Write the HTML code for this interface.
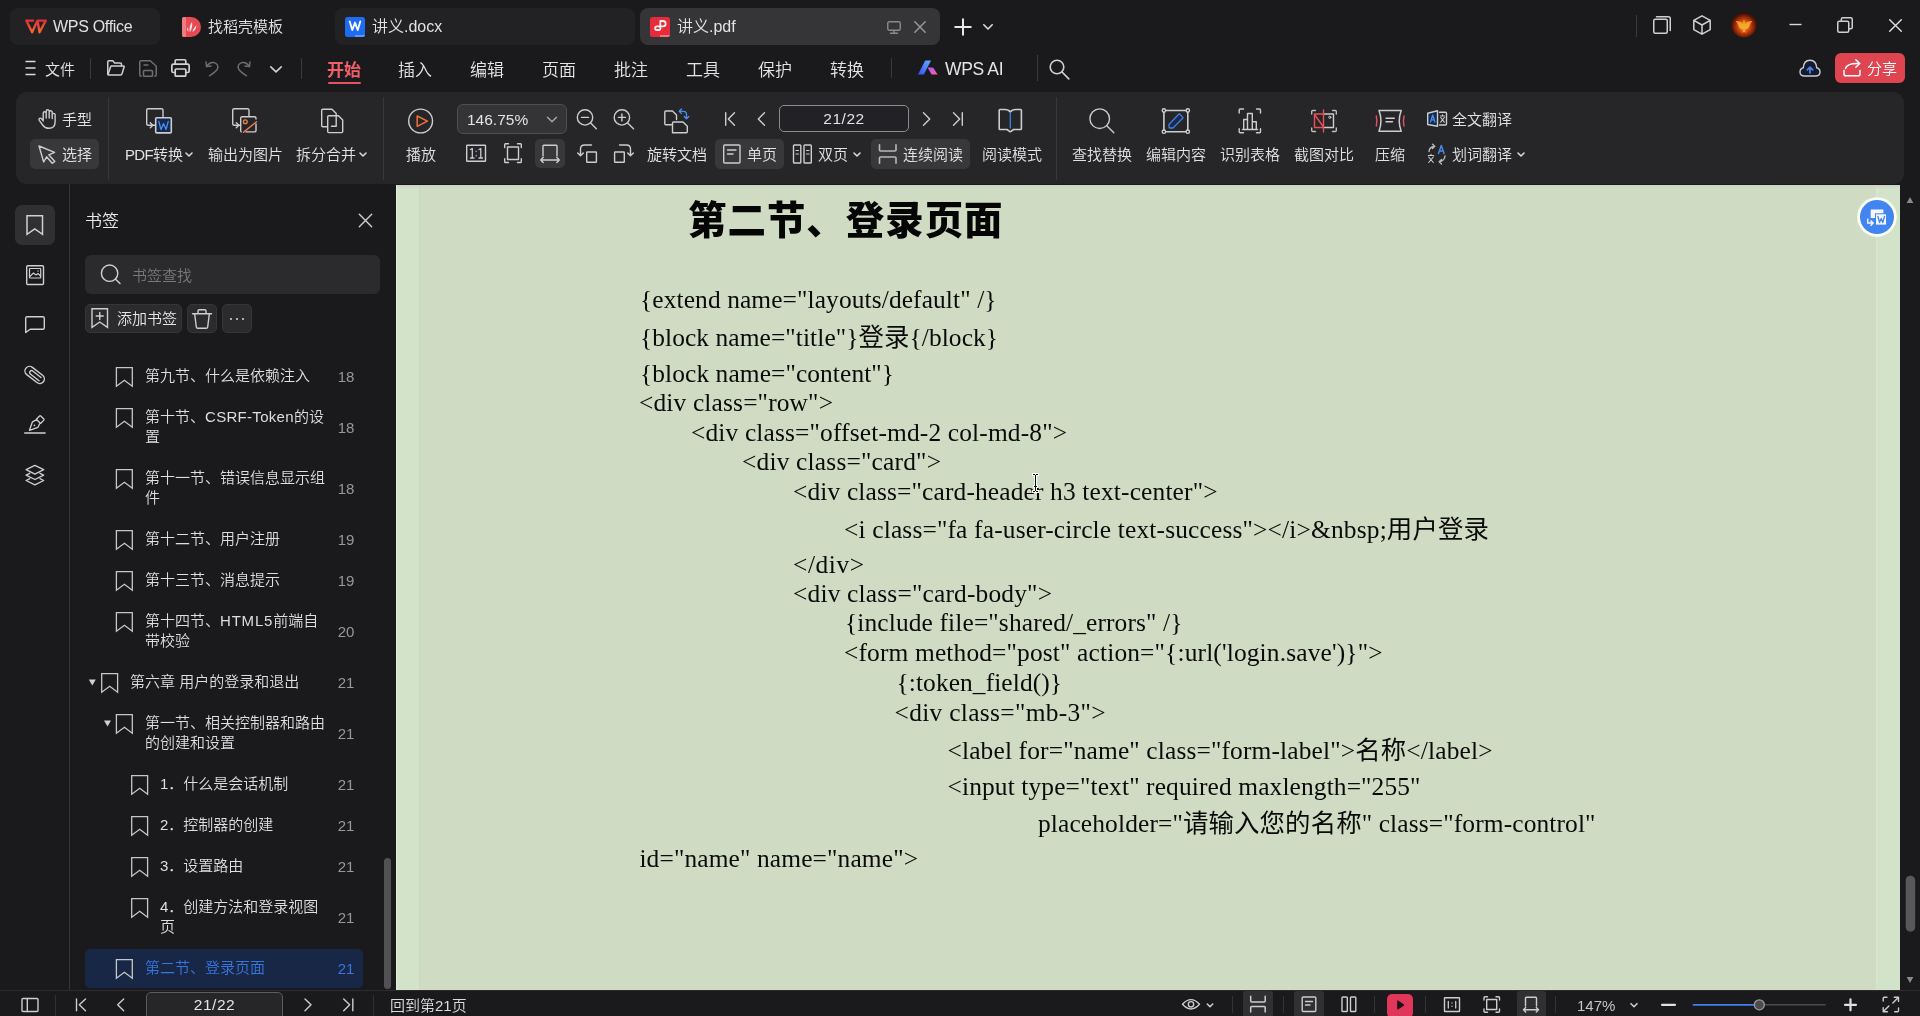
<!DOCTYPE html>
<html lang="zh-CN">
<head>
<meta charset="utf-8">
<title>讲义.pdf - WPS Office</title>
<style>
*{box-sizing:border-box;margin:0;padding:0}
html,body{width:1920px;height:1016px;overflow:hidden;background:#1a1a1c;}
body{position:relative;font-family:"Liberation Sans","Noto Sans CJK SC",sans-serif;color:#e6e6e6;font-size:14px;font-weight:350;}
.rl,.menu,.bm,.t,.pg,.tabtxt{will-change:transform}
.abs{position:absolute}
svg{display:block;overflow:visible;position:absolute}
.t{position:absolute;white-space:nowrap;line-height:1}
.ic{fill:none;stroke:#d8d8d8;stroke-width:1.5;stroke-linecap:round;stroke-linejoin:round}
/* ---------- title bar ---------- */
#titlebar{position:absolute;left:0;top:0;width:1920px;height:48px;background:#1a1a1c}
.tab{position:absolute;top:8px;height:37px;border-radius:8px}
.tabtxt{position:absolute;top:17px;font-size:16px;line-height:20px;color:#e2e2e2;white-space:nowrap}
/* ---------- menu bar ---------- */
#menubar{position:absolute;left:0;top:48px;width:1920px;height:44px;background:#1a1a1c}
.menu{position:absolute;top:12.5px;font-size:17px;line-height:20px;color:#e4e4e4;white-space:nowrap}
.vdiv{position:absolute;width:1px;background:#3a3a3c}
/* ---------- ribbon ---------- */
.rl{position:absolute;font-size:15px;line-height:18px;color:#e2e2e2;white-space:nowrap}
.hl{position:absolute;background:#38383a;border-radius:5px}
/* ---------- sidebar ---------- */
.bm{position:absolute;font-size:15px;line-height:20px;color:#dcdcdc;white-space:nowrap}
.pg{position:absolute;left:264px;width:30px;font-size:15px;line-height:20px;color:#9a9a9c;text-align:center}
/* ---------- document ---------- */
/* ---------- status bar ---------- */
</style>
</head>
<body>
<div id="titlebar">
  <!-- WPS Office home tab -->
  <div class="tab" style="left:10px;width:150px;background:#222224"></div>
  <svg style="left:24px;top:18px" width="24" height="17" viewBox="24 18 24 17">
    <defs><linearGradient id="wg" x1="0" y1="0" x2="0" y2="1"><stop offset="0" stop-color="#e22f3e"/><stop offset="1" stop-color="#f46a2a"/></linearGradient></defs>
    <path d="M34.200 20.600 H26.300 L32.130 32.300 L37.480 20.600 H45.800 L39.530 32.300 L37.480 20.600" fill="none" stroke="url(#wg)" stroke-width="2.300" stroke-linejoin="round" stroke-linecap="butt"/>
  </svg>
  <div class="tabtxt" style="left:53px;letter-spacing:-0.3px;color:#e0e0e0">WPS Office</div>
  <!-- 找稻壳模板 -->
  <svg style="left:182px;top:17px" width="19" height="20" viewBox="0 0 19 20">
    <path d="M0 2 Q0 0 2 0 L9 0 A10 10 0 0 1 9 20 L2 20 Q0 20 0 18 Z" fill="#e84a54"/>
    <path d="M0 2 Q0 0 2 0 L4 0 L4 20 L2 20 Q0 20 0 18 Z" fill="#f07a80"/>
    <path d="M8 15 Q6.5 10 10 5 Q11 10 8 15 Z M10.5 15 Q11 11 14.5 8.5 Q14 13 10.5 15 Z M6.5 15 Q4.5 13 5 10 Q7 12 6.500 15 Z" fill="#fbe4e4"/>
  </svg>
  <div class="tabtxt" style="left:208px;font-size:15px">找稻壳模板</div>
  <!-- 讲义.docx -->
  <div class="tab" style="left:335px;width:300px;background:#222224"></div>
  <svg style="left:345px;top:17px" width="20" height="20" viewBox="0 0 20 20">
    <rect x="0" y="0" width="20" height="20" rx="2.500" fill="#1f6cf2"/>
    <path d="M10 18 H20 V17.500 Q20 20 17.500 20 H10 Z" fill="#5e97f8"/>
    <path d="M4.700 4.400 L7.300 13 L10 5.600 L12.700 13 L15.300 4.400" fill="none" stroke="#f4fbff" stroke-width="1.900" stroke-linejoin="round" stroke-linecap="round"/>
  </svg>
  <div class="tabtxt" style="left:372px">讲义.docx</div>
  <!-- 讲义.pdf active -->
  <div class="tab" style="left:640px;width:300px;background:#353537"></div>
  <svg style="left:650px;top:17px" width="20" height="20" viewBox="0 0 20 20">
    <rect x="0" y="0" width="20" height="20" rx="2.500" fill="#e62c3a"/>
    <path d="M10 18 H20 V17.500 Q20 20 17.500 20 H10 Z" fill="#f2737a"/>
    <path d="M10.300 13 V4 H13 A2.650 2.650 0 0 1 13 9.300 H7 A1.850 1.850 0 0 0 7 13 H10.300" fill="none" stroke="#fdeff0" stroke-width="1.800" stroke-linejoin="round"/>
  </svg>
  <div class="tabtxt" style="left:677px">讲义.pdf</div>
  <svg style="left:887px;top:21px" width="14" height="13" viewBox="0 0 14 13"><rect x="0.750" y="0.750" width="12.500" height="8.500" rx="1.500" class="ic" style="stroke:#8a8a8c;stroke-width:1.400"/><path d="M7 9.500 V12 M3.500 12.300 H10.500" class="ic" style="stroke:#8a8a8c;stroke-width:1.400"/></svg>
  <svg style="left:914px;top:21px" width="12" height="12" viewBox="0 0 12 12"><path d="M0.800 0.800 L11.200 11.200 M11.200 0.800 L0.800 11.200" class="ic" style="stroke:#9a9a9c;stroke-width:1.400"/></svg>
  <!-- plus / chevron -->
  <svg style="left:954px;top:18px" width="18" height="18" viewBox="0 0 18 18"><path d="M9 0.500 V17.500 M0.500 9 H17.500" stroke="#e8e8e8" stroke-width="2" fill="none"/></svg>
  <svg style="left:983px;top:24px" width="10" height="6" viewBox="0 0 10 6"><path d="M0.800 0.800 L5 5 L9.200 0.800" class="ic" style="stroke:#dcdcdc;stroke-width:1.600"/></svg>
  <!-- right controls -->
  <div class="vdiv" style="left:1636px;top:15px;height:22px"></div>
  <svg style="left:1653px;top:16px" width="18" height="18" viewBox="0 0 18 18"><rect x="0.750" y="3.250" width="13.500" height="14" rx="1.500" class="ic" style="stroke:#d0d0d0"/><path d="M3.500 0.750 H15.500 Q17.250 0.750 17.250 2.500 V14.500" class="ic" style="stroke:#d0d0d0"/></svg>
  <svg style="left:1693px;top:15px" width="18" height="20" viewBox="0 0 18 20"><path d="M9 0.800 L17.200 5.400 V14.600 L9 19.200 L0.800 14.600 V5.400 Z M0.800 5.400 L9 10 L17.200 5.400 M9 10 V19.200" class="ic" style="stroke:#d0d0d0"/></svg>
  <!-- avatar -->
  <svg style="left:1731px;top:12px" width="26" height="26" viewBox="0 0 26 26">
    <defs><radialGradient id="av" cx="50%" cy="55%" r="55%"><stop offset="0" stop-color="#f8a030"/><stop offset="0.400" stop-color="#d4500f"/><stop offset="0.750" stop-color="#7c1e08"/><stop offset="1" stop-color="#2c0c06"/></radialGradient></defs>
    <circle cx="13" cy="13" r="12.500" fill="url(#av)"/>
    <path d="M13 8 Q11.500 9.500 12.200 12 Q9 8.500 4.500 9 Q6.500 10 7.500 14 Q9 17.500 12 17.500 L11 21 L13 19.500 L15 21 L14 17.500 Q17 17.500 18.500 14 Q19.500 10 21.500 9 Q17 8.500 13.800 12 Q14.500 9.500 13 8 Z" fill="#f9aa32" opacity="0.900"/>
  </svg>
  <svg style="left:1789px;top:23px" width="13" height="3" viewBox="0 0 13 3"><path d="M0.500 1.500 H12.500" stroke="#d8d8d8" stroke-width="1.400" fill="none"/></svg>
  <svg style="left:1837px;top:17px" width="16" height="16" viewBox="0 0 16 16"><rect x="0.750" y="4.250" width="11" height="11" rx="1.500" class="ic" style="stroke:#d0d0d0"/><path d="M4.300 4 V2.300 Q4.300 0.750 5.800 0.750 H13.700 Q15.250 0.750 15.250 2.300 V10.200 Q15.250 11.700 13.700 11.700 H12" class="ic" style="stroke:#d0d0d0"/></svg>
  <svg style="left:1889px;top:19px" width="13" height="13" viewBox="0 0 13 13"><path d="M0.700 0.700 L12.300 12.300 M12.300 0.700 L0.700 12.300" class="ic" style="stroke:#e0e0e0;stroke-width:1.400"/></svg>
</div>
<div id="menubar">
  <!-- hamburger + 文件 -->
  <svg style="left:25px;top:12px" width="11" height="16" viewBox="0 0 11 16"><path d="M0.500 1.500 H10.500 M0.500 8 H10.500 M0.500 14.500 H10.500" stroke="#dcdcdc" stroke-width="1.500" fill="none"/></svg>
  <div class="menu" style="left:45px;top:11.5px;font-size:15px">文件</div>
  <div class="vdiv" style="left:90px;top:10px;height:21px"></div>
  <!-- open -->
  <svg style="left:107px;top:12px" width="18" height="16" viewBox="0 0 18 16"><path d="M0.750 14 V2 Q0.750 0.750 2 0.750 H5.800 L7.600 2.900 H13.300 Q14.500 2.900 14.500 4.100 V5.800" class="ic" style="stroke:#cfcfcf"/><path d="M0.900 14.800 L3.600 6.700 Q3.900 5.900 4.800 5.900 H16.300 Q17.500 5.900 17.100 7 L14.900 14 Q14.600 14.900 13.700 14.900 H1.200 Z" class="ic" style="stroke:#cfcfcf"/></svg>
  <!-- save (dim) -->
  <svg style="left:139px;top:12px" width="18" height="18" viewBox="0 0 18 18"><path d="M2.200 16.250 Q0.750 16.250 0.750 14.800 V2.200 Q0.750 0.750 2.200 0.750 H11.300 L17.250 6.300 V14.800 Q17.250 16.250 15.800 16.250" class="ic" style="stroke:#6e6e70"/><path d="M5 5 H9" class="ic" style="stroke:#6e6e70"/><rect x="4.500" y="10.500" width="9" height="5.800" rx="0.800" class="ic" style="stroke:#6e6e70"/></svg>
  <!-- print -->
  <svg style="left:171px;top:11px" width="19" height="18" viewBox="0 0 19 18"><path d="M4.200 5 V2 Q4.200 0.750 5.400 0.750 H13.600 Q14.800 0.750 14.800 2 V5" class="ic" style="stroke:#d2d2d2;stroke-width:1.700"/><path d="M4 13.500 H2.500 Q0.850 13.500 0.850 11.900 V6.800 Q0.850 5.200 2.500 5.200 H16.500 Q18.150 5.200 18.150 6.800 V11.900 Q18.150 13.500 16.500 13.500 H15" class="ic" style="stroke:#d2d2d2;stroke-width:1.700"/><rect x="4.200" y="10" width="10.600" height="7.200" rx="1" class="ic" style="stroke:#d2d2d2;stroke-width:1.700"/></svg>
  <!-- undo (dim) -->
  <svg style="left:205px;top:13px" width="14" height="16" viewBox="0 0 14 16"><path d="M1 1 L1.600 5.600 L6 5" class="ic" style="stroke:#6e6e70"/><path d="M1.800 5.400 Q4.500 0.800 9 1.600 Q13.800 3 12.600 7.600 Q11.500 10.500 4.500 14.800" class="ic" style="stroke:#6e6e70"/></svg>
  <!-- redo (dim) -->
  <svg style="left:237px;top:13px" width="14" height="16" viewBox="0 0 14 16"><path d="M13 1 L12.400 5.600 L8 5" class="ic" style="stroke:#6e6e70"/><path d="M12.200 5.400 Q9.500 0.800 5 1.600 Q0.200 3 1.400 7.600 Q2.500 10.500 9.500 14.800" class="ic" style="stroke:#6e6e70"/></svg>
  <!-- chevron -->
  <svg style="left:270px;top:18px" width="12" height="7" viewBox="0 0 12 7"><path d="M0.800 0.800 L6 5.800 L11.200 0.800" class="ic" style="stroke:#d0d0d0;stroke-width:1.600"/></svg>
  <div class="vdiv" style="left:301px;top:10px;height:21px"></div>
  <!-- menu items -->
  <div class="menu" style="left:327px;color:#f0606b;font-weight:700">开始</div>
  <div class="abs" style="left:328px;top:34px;width:33px;height:2px;background:#e8525e;border-radius:1px"></div>
  <div class="menu" style="left:398px">插入</div>
  <div class="menu" style="left:470px">编辑</div>
  <div class="menu" style="left:542px">页面</div>
  <div class="menu" style="left:614px">批注</div>
  <div class="menu" style="left:686px">工具</div>
  <div class="menu" style="left:758px">保护</div>
  <div class="menu" style="left:830px">转换</div>
  <div class="vdiv" style="left:891px;top:10px;height:20px"></div>
  <!-- WPS AI -->
  <svg style="left:918px;top:12px" width="20" height="15" viewBox="0 0 20 15">
    <defs>
      <linearGradient id="ai1" x1="0" y1="1" x2="1" y2="0"><stop offset="0" stop-color="#3a4df5"/><stop offset="1" stop-color="#5fb0ff"/></linearGradient>
      <linearGradient id="ai2" x1="0" y1="0" x2="1" y2="1"><stop offset="0" stop-color="#a65cf5"/><stop offset="1" stop-color="#ff5ea8"/></linearGradient>
    </defs>
    <path d="M0 14.500 L7.200 0.500 L13 0.500 L5.800 14.500 Z" fill="url(#ai1)"/>
    <path d="M9.500 7.500 L14.200 7.500 Q15.200 7.500 15.700 8.400 L19.600 14.500 L13.600 14.500 Z" fill="url(#ai2)"/>
  </svg>
  <div class="menu" style="left:944.5px;top:11px;font-size:17.500px;letter-spacing:-0.35px">WPS AI</div>
  <div class="vdiv" style="left:1037px;top:7px;height:26px"></div>
  <!-- search -->
  <svg style="left:1049px;top:11px" width="21" height="21" viewBox="0 0 21 21"><circle cx="8" cy="8" r="6.800" class="ic" style="stroke:#d0d0d0;stroke-width:1.600"/><path d="M13 13 L19.800 19.800" class="ic" style="stroke:#d0d0d0;stroke-width:1.700"/></svg>
  <!-- cloud -->
  <svg style="left:1799px;top:10.500px" width="22" height="18" viewBox="0 0 22 18"><path d="M5.500 17 Q1 17 1 13 Q1 9.600 4.300 8.800 Q4.800 1.200 11 1.200 Q17.200 1.200 17.700 8.800 Q21 9.600 21 13 Q21 17 16.500 17 Z" fill="#121b32" stroke="#cbcbcb" stroke-width="1.400" stroke-linejoin="round"/><path d="M11 13.800 V8.600 M8.300 10.900 L11 8.200 L13.700 10.900" fill="none" stroke="#5582e2" stroke-width="1.800" stroke-linecap="round" stroke-linejoin="round"/></svg>
  <!-- share -->
  <div class="abs" style="left:1835px;top:5px;width:70px;height:30px;background:#df4551;border-radius:6px"></div>
  <svg style="left:1843px;top:11px" width="18" height="18" viewBox="0 0 18 18"><path d="M1 11.500 V15 Q1 16.800 2.800 16.800 H15.200 Q17 16.800 17 15 V11.500" fill="none" stroke="#fff" stroke-width="1.500" stroke-linecap="round"/><path d="M2.500 9.500 Q4 4.500 14 4.500 H16.500 M12.800 0.800 L16.800 4.500 L12.800 8.200" fill="none" stroke="#fff" stroke-width="1.500" stroke-linecap="round" stroke-linejoin="round"/></svg>
  <div class="menu" style="left:1867px;top:11px;font-size:15px;color:#fff">分享</div>
</div>
<div class="abs" style="left:16px;top:92px;width:1888px;height:92px;background:#262628;border-radius:11px"></div>
<!-- highlights -->
<div class="hl" style="left:30px;top:139px;width:69px;height:30px"></div>
<div class="hl" style="left:535px;top:139px;width:30px;height:29px"></div>
<div class="hl" style="left:715px;top:139px;width:69px;height:30px"></div>
<div class="hl" style="left:871px;top:139px;width:99px;height:30px"></div>
<!-- dividers -->
<div class="vdiv" style="left:108px;top:97px;height:83px;background:#38383a"></div>
<div class="vdiv" style="left:383px;top:97px;height:83px;background:#38383a"></div>
<div class="vdiv" style="left:1056px;top:97px;height:83px;background:#38383a"></div>
<!-- zoom box & page box -->
<div class="abs" style="left:457px;top:104px;width:110px;height:30px;background:#343436;border:1px solid #4e4e50;border-radius:6px"></div>
<div class="rl" style="left:467px;top:110px;font-size:15.500px;line-height:20px">146.75%</div>
<div class="abs" style="left:779px;top:105px;width:130px;height:27px;background:#222226;border:1px solid #8c8c8e;border-radius:5px"></div>
<div class="rl" style="left:779px;top:109px;width:130px;text-align:center;font-size:15.500px;line-height:20px;letter-spacing:0.5px;padding-left:0px">21/22</div>
<!-- labels row 1 -->
<div class="rl" style="left:62px;top:110px;line-height:20px">手型</div>
<div class="rl" style="left:1452px;top:110px;line-height:20px">全文翻译</div>
<!-- labels row 2 -->
<div class="rl" style="left:62px;top:145px;line-height:20px">选择</div>
<div class="rl" style="left:124.5px;top:145px;line-height:20px"><span style="letter-spacing:-0.7px">PDF</span>转换</div>
<div class="rl" style="left:208px;top:145px;line-height:20px">输出为图片</div>
<div class="rl" style="left:296px;top:145px;line-height:20px">拆分合并</div>
<div class="rl" style="left:406px;top:145px;line-height:20px">播放</div>
<div class="rl" style="left:647px;top:145px;line-height:20px">旋转文档</div>
<div class="rl" style="left:747px;top:145px;line-height:20px">单页</div>
<div class="rl" style="left:818px;top:145px;line-height:20px">双页</div>
<div class="rl" style="left:903px;top:145px;line-height:20px">连续阅读</div>
<div class="rl" style="left:982px;top:145px;line-height:20px">阅读模式</div>
<div class="rl" style="left:1072px;top:145px;line-height:20px">查找替换</div>
<div class="rl" style="left:1146px;top:145px;line-height:20px">编辑内容</div>
<div class="rl" style="left:1220px;top:145px;line-height:20px">识别表格</div>
<div class="rl" style="left:1294px;top:145px;line-height:20px">截图对比</div>
<div class="rl" style="left:1375px;top:145px;line-height:20px">压缩</div>
<div class="rl" style="left:1452px;top:145px;line-height:20px">划词翻译</div>
<svg style="left:0;top:0" width="1920" height="190" viewBox="0 0 1920 190" fill="none" stroke="#cdcdcd" stroke-width="1.400" stroke-linecap="round" stroke-linejoin="round">
  <!-- hand -->
  <path d="M43.200 120.500 V113.200 a1.500 1.500 0 0 1 3 0 V118 M46.200 118 V111.300 a1.500 1.500 0 0 1 3 0 V118 M49.200 118 V112.200 a1.500 1.500 0 0 1 3 0 V118.500 M52.200 118.500 V114.800 a1.450 1.450 0 0 1 2.900 0 V122 Q55.100 128.300 49 128.300 Q45 128.300 43 125.500 L39.300 120.300 Q38.500 119 39.600 118.300 Q40.700 117.700 41.700 118.900 L43.200 120.900"/>
  <!-- select arrow -->
  <path d="M39 146 L54.600 152.300 L48.800 154.800 L54.800 161.500 L52.200 163.300 L46.600 156.800 L43.700 162 Z"/>
  <!-- PDF convert -->
  <path d="M155 125.300 H148.200 Q146.700 125.300 146.700 123.800 V110.200 Q146.700 108.700 148.200 108.700 H161.500 Q163 108.700 163 110.200 V116.500"/>
  <path d="M150.300 122.800 L152.800 125.300 L150.300 127.800"/>
  <rect x="155.700" y="117.700" width="15.600" height="15.200" rx="1" fill="#15294d" stroke-width="1.600"/>
  <path d="M158.800 121.500 L161 129.500 L163.500 123.500 L166 129.500 L168.200 121.500" stroke="#4a8cf0" stroke-width="1.300"/>
  <!-- export image -->
  <path d="M240.500 125.300 H234.200 Q232.700 125.300 232.700 123.800 V110.200 Q232.700 108.700 234.200 108.700 H247.500 Q249 108.700 249 110.200 V116"/>
  <path d="M236.300 122.800 L238.800 125.300 L236.300 127.800"/>
  <path d="M256 124 V130.400 Q256 131.900 254.500 131.900 H246 M241.200 131.900 Q240.700 131.900 240.700 130.400 V118.200 Q240.700 116.700 242.200 116.700 H254.500 Q256 116.700 256 118.200 V119"/>
  <circle cx="245.300" cy="121.800" r="1.900" stroke="#f08050" stroke-width="1.300"/>
  <path d="M243.500 132.300 L256.500 121.700" stroke="#f08050" stroke-width="1.400"/>
  <!-- split merge -->
  <path d="M327 126.700 H322.700 Q321.700 126.700 321.700 125.700 V110.300 Q321.700 109.300 322.700 109.300 H332 L336.200 113.500 V126.200 H331.500"/>
  <path d="M328.700 115.700 H338.500 L342.700 119.900 V131.600 Q342.700 132.600 341.700 132.600 H328.700 Q327.700 132.600 327.700 131.600 V116.700 Q327.700 115.700 328.700 115.700 Z"/>
  <!-- play -->
  <circle cx="420.600" cy="121" r="11.900"/>
  <path d="M417.200 116 L427.400 121.200 L417.200 126.400 Z" stroke="#f0703c" stroke-width="1.500"/>
  <!-- zoom chevron -->
  <path d="M547.500 117.300 L552 121.800 L556.500 117.300" stroke="#a8a8aa"/>
  <!-- zoom out -->
  <circle cx="585" cy="117.400" r="7.700"/><path d="M590.700 123.100 L596.300 128.700 M581.500 117.400 H588.500" />
  <!-- zoom in -->
  <circle cx="621.900" cy="117.400" r="7.700"/><path d="M627.600 123.100 L633.500 128.700 M618.400 117.400 H625.400 M621.900 113.900 V120.900"/>
  <!-- 1:1 -->
  <rect x="466.700" y="145.200" width="18.800" height="16" rx="0.500"/>
  <path d="M470.500 149.500 L472.300 148.500 V158 M470.500 158 H474 M479 149.500 L480.800 148.500 V158 M479 158 H482.500" stroke-width="1.300"/>
  <circle cx="476.200" cy="151.300" r="0.900" fill="#7a8fd0" stroke="none"/><circle cx="476.200" cy="155.700" r="0.900" fill="#7a8fd0" stroke="none"/>
  <!-- fit page -->
  <rect x="507.500" y="147" width="11" height="12.500" />
  <path d="M504.700 147.500 V144.500 Q504.700 143.700 505.500 143.700 H508.500 M517.500 143.700 H520.500 Q521.300 143.700 521.300 144.500 V147.500 M521.300 158.700 V161.700 Q521.300 162.500 520.500 162.500 H517.500 M508.500 162.500 H505.500 Q504.700 162.500 504.700 161.700 V158.700"/>
  <!-- fit width -->
  <path d="M543 156 V146 Q543 145.200 543.800 145.200 H556.200 Q557 145.200 557 146 V156"/>
  <path d="M540.700 160 H559.300 M543.200 157.500 L540.700 160 L543.200 162.500 M556.800 157.500 L559.300 160 L556.800 162.500"/>
  <!-- rotate left -->
  <rect x="586.700" y="152" width="9.700" height="10.300" rx="0.500"/>
  <path d="M591.500 145 H584.500 Q580.500 145 580.500 149 V155.500 M577.700 153 L580.500 155.800 L583.300 153"/>
  <!-- rotate right -->
  <rect x="614.600" y="152" width="9.700" height="10.300" rx="0.500"/>
  <path d="M619.500 145 H626.500 Q630.500 145 630.500 149 V155.500 M627.700 153 L630.500 155.800 L633.300 153"/>
  <!-- rotate doc -->
  <path d="M671.500 124.700 H665.800 Q664.800 124.700 664.800 123.700 V112 Q664.800 111 665.800 111 H672.500 L676.500 115 V119.500"/>
  <path d="M672.500 132.700 V123 Q672.500 122 673.500 122 H683 L687.300 126.300 V131.700 Q687.300 132.700 686.300 132.700 Z"/>
  <path d="M681.500 109 L679.200 111.300 L681.500 113.600 M679.500 111.300 H683.500 Q686.500 111.300 686.500 114.300 V118.500 M684.200 116.500 L686.500 118.800 L688.800 116.500" stroke="#4a90f0" stroke-width="1.300"/>
  <!-- first/prev/next/last -->
  <path d="M725.700 112.700 V125.300 M734.500 112.700 L728.300 119 L734.500 125.300"/>
  <path d="M764.500 112.700 L758.300 119 L764.500 125.300"/>
  <path d="M923.500 112.700 L929.700 119 L923.500 125.300"/>
  <path d="M953.500 112.700 L959.700 119 L953.500 125.300 M962.300 112.700 V125.300"/>
  <!-- single page -->
  <rect x="723.700" y="145" width="16.300" height="18" rx="1"/><path d="M727.500 150 H736 M727.500 154 H733"/>
  <!-- double page -->
  <rect x="793.500" y="145" width="7.300" height="18" rx="0.800"/><rect x="804" y="145" width="7.300" height="18" rx="0.800"/>
  <path d="M796 150.500 H798.500 M796 154 H798.500 M806.500 150.500 H809 M806.500 154 H809" stroke-width="1.100"/>
  <!-- continuous -->
  <path d="M879.500 144.700 V150 Q879.500 151 880.500 151 H895 Q896 151 896 150 V144.700 M879.500 163.300 V158 Q879.500 157 880.500 157 H895 Q896 157 896 158 V163.300" stroke-width="1.600" stroke="#b8b8ba"/>
  <!-- reading mode -->
  <path d="M1010.300 131.800 L1007 129.500 H1000 Q999.200 129.500 999.200 128.700 V110.300 Q999.200 109.500 1000 109.500 H1005 Q1008.500 109.500 1010.300 112 Q1012.100 109.500 1015.600 109.500 H1020.600 Q1021.400 109.500 1021.400 110.300 V128.700 Q1021.400 129.500 1020.600 129.500 H1013.600 Z" stroke-width="1.600"/>
  <path d="M1010.300 112.500 V128" stroke="#3f7fe8" stroke-width="1.300"/>
  <!-- find replace -->
  <circle cx="1099.700" cy="118.700" r="9.800"/><path d="M1106.800 125.800 L1113.800 132.800"/>
  <!-- edit content -->
  <path d="M1165.700 110.500 H1186 M1165.700 131.700 H1186 M1163.900 112.300 V129.900 M1187.800 112.300 V129.900" stroke-width="1.600"/>
  <circle cx="1163.900" cy="110.500" r="1.700"/><circle cx="1187.800" cy="110.500" r="1.700"/><circle cx="1163.900" cy="131.700" r="1.700"/><circle cx="1187.800" cy="131.700" r="1.700"/>
  <path d="M1169 124.500 L1178.700 114.300 Q1179.300 113.700 1179.900 114.300 L1182.700 117.100 Q1183.300 117.700 1182.700 118.300 L1173 128 H1169.800 Q1169 128 1169 127.200 Z" stroke="#3f7fe8" fill="#1b2a48" stroke-width="1.300"/>
  <!-- recognize table -->
  <path d="M1239.200 113 V110 Q1239.200 109 1240.200 109 H1243.500 M1256.500 109 H1259.500 Q1260.500 109 1260.500 110 V113 M1260.500 128.700 V131.700 Q1260.500 132.700 1259.500 132.700 H1256.500 M1243.500 132.700 H1240.200 Q1239.200 132.700 1239.200 131.700 V128.700"/>
  <path d="M1242.500 129.500 H1257.500 M1243.700 129.500 V119.500 H1247.500 M1247.500 129.500 V113.500 H1252.300 V129.500 M1252.300 121.700 H1256.300 V129.500"/>
  <!-- screenshot compare -->
  <path d="M1311.700 114 V111.500 Q1311.700 110.500 1312.700 110.500 H1315.500 M1332.500 110.500 H1335.300 Q1336.300 110.500 1336.300 111.500 V114 M1336.300 128 V130.500 Q1336.300 131.500 1335.300 131.500 H1332.500 M1315.500 131.500 H1312.700 Q1311.700 131.500 1311.700 130.500 V128" stroke="#bdbdbd"/>
  <path d="M1324.500 114 H1333.500 V127.500 H1324.500" />
  <circle cx="1329.800" cy="117.300" r="1.100" stroke-width="1"/>
  <path d="M1323.500 114 H1314.500 V127.500 H1323.500 M1314.500 114.500 L1323.500 127 M1323.500 110 V132" stroke="#e8505c" stroke-width="1.400"/>
  <!-- compress -->
  <path d="M1379 110.500 H1401.200 Q1397.300 121 1401.200 131.200 H1379 Q1382.900 121 1379 110.500 Z" stroke-width="1.500"/>
  <path d="M1386 118.300 H1394.300 M1386 121.700 H1392.500" />
  <path d="M1376.300 116 Q1377.500 121 1376.300 126 M1404 116 Q1402.800 121 1404 126" stroke="#e8505c" stroke-width="1.400"/>
  <!-- full translate -->
  <path d="M1437.500 126.300 L1427.700 124.500 V113.200 L1437.500 110.700 Z" fill="#15294d"/>
  <path d="M1439.500 112.200 H1445.500 Q1446.500 112.200 1446.500 113.200 V124 Q1446.500 125 1445.500 125 H1439.500"/>
  <path d="M1430.500 122 L1432.700 115 L1434.900 122 M1431.300 119.800 H1434.100" stroke="#4a8cf0" stroke-width="1.300"/>
  <path d="M1440.500 116 H1444.500 M1442.500 114.800 V116 M1440.700 117.500 L1444.300 122.200 M1444.300 117.500 L1440.700 122.200" stroke-width="1.100"/>
  <!-- word translate -->
  <path d="M1429 151.500 Q1429.500 147 1434.500 146.300 M1432.500 144.300 L1434.800 146.300 L1432.500 148.500" stroke="#b8b8ba"/>
  <path d="M1445 156 Q1444.500 160.800 1439.500 161.700 M1441.500 159.500 L1439.200 161.700 L1441.500 163.900" stroke="#b8b8ba"/>
  <path d="M1438.500 153.500 L1441.300 145.500 L1444.100 153.500 M1439.500 151 H1443.100" stroke="#4a8cf0" stroke-width="1.400"/>
  <path d="M1428.300 155.500 H1433.700 M1431 154.300 V155.500 M1428.700 157 L1433.300 162.500 M1433.300 157 L1428.700 162.500" stroke-width="1.100"/>
  <!-- dropdown arrows -->
  <g stroke="#d8d8d8" stroke-width="1.600">
  <path d="M186 153 L189 156 L192 153"/>
  <path d="M360 153 L363 156 L366 153"/>
  <path d="M854 153 L857 156 L860 153"/>
  <path d="M1518 153 L1521 156 L1524 153"/>
  </g>
</svg>
<!-- sidebar -->
<div class="abs" style="left:69px;top:184px;width:1px;height:806px;background:#363638"></div>
<div class="abs" style="left:15px;top:205px;width:40px;height:40px;background:#303032;border-radius:7px"></div>
<div class="t" style="left:85px;top:211.5px;font-size:17px;line-height:20px;color:#e8e8e8">书签</div>
<div class="abs" style="left:85px;top:255px;width:295px;height:39px;background:#2b2b2d;border-radius:6px"></div>
<div class="t" style="left:132px;top:266px;font-size:15px;line-height:20px;color:#78787a">书签查找</div>
<div class="abs" style="left:85px;top:304px;width:97px;height:29px;background:#2b2b2d;border:1px solid #363638;border-radius:5px"></div>
<div class="t" style="left:117px;top:309px;font-size:15px;line-height:20px;color:#e4e4e4">添加书签</div>
<div class="abs" style="left:187px;top:304px;width:30px;height:29px;background:#2b2b2d;border:1px solid #363638;border-radius:5px"></div>
<div class="abs" style="left:222px;top:304px;width:30px;height:29px;background:#2b2b2d;border:1px solid #363638;border-radius:5px"></div>
<div class="bm" style="left:144.6px;top:365.5px;color:#dedede">第九节、什么是依赖注入</div>
<div class="pg" style="left:331px;top:366.5px;color:#98989a">18</div>
<div class="bm" style="left:144.6px;top:406.5px;color:#dedede">第十节、<span style="letter-spacing:0.3px">CSRF-Token</span>的设<br>置</div>
<div class="pg" style="left:331px;top:417.5px;color:#98989a">18</div>
<div class="bm" style="left:144.6px;top:467.5px;color:#dedede">第十一节、错误信息显示组<br>件</div>
<div class="pg" style="left:331px;top:478.5px;color:#98989a">18</div>
<div class="bm" style="left:144.6px;top:528.5px;color:#dedede">第十二节、用户注册</div>
<div class="pg" style="left:331px;top:529.5px;color:#98989a">19</div>
<div class="bm" style="left:144.6px;top:569.5px;color:#dedede">第十三节、消息提示</div>
<div class="pg" style="left:331px;top:570.5px;color:#98989a">19</div>
<div class="bm" style="left:144.6px;top:610.5px;color:#dedede">第十四节、<span style="letter-spacing:0.8px">HTML5</span>前端自<br>带校验</div>
<div class="pg" style="left:331px;top:621.5px;color:#98989a">20</div>
<div class="bm" style="left:130.0px;top:671.5px;color:#dedede">第六章 用户的登录和退出</div>
<div class="pg" style="left:331px;top:672.5px;color:#98989a">21</div>
<div class="bm" style="left:144.6px;top:712.5px;color:#dedede">第一节、相关控制器和路由<br>的创建和设置</div>
<div class="pg" style="left:331px;top:723.5px;color:#98989a">21</div>
<div class="bm" style="left:160.3px;top:773.5px;color:#dedede">1．什么是会话机制</div>
<div class="pg" style="left:331px;top:774.5px;color:#98989a">21</div>
<div class="bm" style="left:160.3px;top:814.5px;color:#dedede">2．控制器的创建</div>
<div class="pg" style="left:331px;top:815.5px;color:#98989a">21</div>
<div class="bm" style="left:160.3px;top:855.5px;color:#dedede">3．设置路由</div>
<div class="pg" style="left:331px;top:856.5px;color:#98989a">21</div>
<div class="bm" style="left:160.3px;top:896.5px;color:#dedede">4．创建方法和登录视图<br>页</div>
<div class="pg" style="left:331px;top:907.5px;color:#98989a">21</div>
<div class="abs" style="left:85px;top:948.5px;width:278px;height:39px;background:#192746;border-radius:5px"></div>
<div class="bm" style="left:144.6px;top:957.5px;color:#3676de">第二节、登录页面</div>
<div class="pg" style="left:331px;top:958.5px;color:#3676de">21</div>
<svg style="left:0;top:0" width="400" height="1016" viewBox="0 0 400 1016" fill="none" stroke="#c6c6c6" stroke-width="1.3" stroke-linejoin="miter">
<path d="M116.4 367.7 H132.3 V386.3 L124.4 380.3 L116.4 386.3 Z"/>
<path d="M116.4 408.7 H132.3 V427.3 L124.4 421.3 L116.4 427.3 Z"/>
<path d="M116.4 469.7 H132.3 V488.3 L124.4 482.3 L116.4 488.3 Z"/>
<path d="M116.4 530.7 H132.3 V549.3 L124.4 543.3 L116.4 549.3 Z"/>
<path d="M116.4 571.7 H132.3 V590.3 L124.4 584.3 L116.4 590.3 Z"/>
<path d="M116.4 612.7 H132.3 V631.3 L124.4 625.3 L116.4 631.3 Z"/>
<path d="M101.7 673.7 H117.6 V692.3 L109.7 686.3 L101.7 692.3 Z"/>
<path d="M88.8 679.5 H95.8 L92.3 685.5 Z" fill="#d0d0d0" stroke="none"/>
<path d="M116.4 714.7 H132.3 V733.3 L124.4 727.3 L116.4 733.3 Z"/>
<path d="M104.0 720.5 H111.0 L107.5 726.5 Z" fill="#d0d0d0" stroke="none"/>
<path d="M131.7 775.7 H147.6 V794.3 L139.7 788.3 L131.7 794.3 Z"/>
<path d="M131.7 816.7 H147.6 V835.3 L139.7 829.3 L131.7 835.3 Z"/>
<path d="M131.7 857.7 H147.6 V876.3 L139.7 870.3 L131.7 876.3 Z"/>
<path d="M131.7 898.7 H147.6 V917.3 L139.7 911.3 L131.7 917.3 Z"/>
<path d="M116.4 959.7 H132.3 V978.3 L124.4 972.3 L116.4 978.3 Z"/>
</svg>
<svg style="left:0;top:184px" width="400" height="320" viewBox="0 184 400 320" fill="none" stroke="#cfcfcf" stroke-width="1.400" stroke-linecap="round" stroke-linejoin="round">
  <!-- bookmark (active) -->
  <path d="M27 215.700 H42.500 V234.300 L34.750 229 L27 234.300 Z" stroke-linejoin="miter" stroke-width="1.500"/>
  <!-- thumbnails -->
  <rect x="26.700" y="265.700" width="16.800" height="18.800" rx="1"/>
  <rect x="29.500" y="268.500" width="11.200" height="9.500" rx="0.500" stroke-width="1.200"/>
  <path d="M29.800 276.500 L33.500 273 L36 275 L38 273.500 L40.500 276" stroke-width="1.100"/>
  <circle cx="38" cy="271" r="0.700" fill="#cfcfcf" stroke="none"/>
  <!-- comment -->
  <path d="M25.700 332.500 V318.200 Q25.700 316.700 27.200 316.700 H42.800 Q44.300 316.700 44.300 318.200 V327.700 Q44.300 329.200 42.800 329.200 H30.200 Z"/>
  <!-- paperclip -->
  <g transform="translate(34.700 375) rotate(38)">
    <path d="M-6.500 -4.600 H6.400 A4.600 4.600 0 0 1 6.400 4.600 H-6.500 A4.600 4.600 0 0 1 -6.500 -4.600 Z"/>
    <path d="M7 1.900 H-4 A1.900 1.900 0 0 1 -4 -1.900 H6.500"/>
  </g>
  <!-- sign pen -->
  <path d="M24.700 433 H45.100"/>
  <g transform="translate(36.050 423.700) rotate(45)">
    <path d="M0 9.300 L-3.900 1.200 L-2.300 -3.400 H2.300 L3.900 1.200 Z M-3 -3.400 V-8 Q-3 -8.800 -2.200 -8.800 H2.200 Q3 -8.800 3 -8 V-3.400" stroke-width="1.300"/>
    <circle cx="0" cy="2.300" r="0.800" fill="#cfcfcf" stroke="none"/>
  </g>
  <!-- layers -->
  <path d="M34.900 465.300 L43.700 469.700 L34.900 474.100 L26.100 469.700 Z M29.800 473.300 L26.100 475.100 L34.900 479.500 L43.700 475.100 L40 473.300 M29.800 478.700 L26.100 480.500 L34.900 484.900 L43.700 480.500 L40 478.700" stroke-width="1.300"/>
  <!-- panel close X -->
  <path d="M359.300 214.300 L371.700 226.700 M371.700 214.300 L359.300 226.700"/>
  <!-- search icon -->
  <circle cx="109.600" cy="273.200" r="8.200"/><path d="M115.600 279.200 L120 283.600"/>
  <!-- add bookmark icon -->
  <path d="M92 308.700 H107.500 V327.300 L99.750 322 L92 327.300 Z M99.750 312.500 V319.500 M96.250 316 H103.250" stroke-linejoin="miter"/>
  <!-- trash -->
  <path d="M192.500 313.700 H211.500 M198 313.500 V311 Q198 309.700 199.300 309.700 H204.700 Q206 309.700 206 311 V313.500 M194.700 314 L196.300 327 Q196.500 328.300 197.800 328.300 H206.200 Q207.500 328.300 207.700 327 L209.300 314"/>
  <!-- more dots -->
  <circle cx="231" cy="319" r="1.100" fill="#cfcfcf" stroke="none"/><circle cx="237" cy="319" r="1.100" fill="#cfcfcf" stroke="none"/><circle cx="243" cy="319" r="1.100" fill="#cfcfcf" stroke="none"/>
</svg>
<!-- sidebar scrollbar -->
<div class="abs" style="left:384px;top:858px;width:7px;height:131px;background:#525254;border-radius:3.500px"></div>
<!-- document -->
<div class="abs" style="left:396px;top:185px;width:1504px;height:805px;background:#cfdcc3"></div>
<div class="abs" style="left:396px;top:185px;width:24px;height:805px;background:#d3e3ca;border-right:1px solid #cad9c0"></div>
<div class="abs" style="left:1876px;top:185px;width:24px;height:805px;background:#d3e3ca;border-left:1px solid #d9e7d0"></div>
<div class="abs" style="left:396px;top:185px;width:1504px;height:4px;background:linear-gradient(#ccd3c6,rgba(207,220,195,0))"></div>
<div class="abs" style="left:396px;top:185px;width:2px;height:805px;background:linear-gradient(90deg,#e4efdc,rgba(211,227,202,0))"></div>
<svg style="left:0;top:0" width="1920" height="1016" viewBox="0 0 1920 1016" font-family="'Liberation Serif','Noto Sans CJK SC',serif" font-size="25.43" font-weight="400" fill="#0a0a0a" xml:space="preserve">
<text x="688.00" y="234.20" font-family="'Noto Sans CJK SC','Liberation Sans',sans-serif" font-weight="900" font-size="38.40" textLength="314.50" lengthAdjust="spacing" fill="#050505">第二节、登录页面</text>
<text x="640.00" y="307.50" textLength="356.50" lengthAdjust="spacing">{extend name="layouts/default" /}</text>
<text x="640.00" y="345.50" textLength="358.00" lengthAdjust="spacing">{block name="title"}登录{/block}</text>
<text x="640.00" y="382.00" textLength="254.00" lengthAdjust="spacing">{block name="content"}</text>
<text x="639.00" y="410.50" textLength="194.00" lengthAdjust="spacing">&lt;div class="row"&gt;</text>
<text x="691.00" y="440.50" textLength="376.00" lengthAdjust="spacing">&lt;div class="offset-md-2 col-md-8"&gt;</text>
<text x="742.00" y="469.50" textLength="199.00" lengthAdjust="spacing">&lt;div class="card"&gt;</text>
<text x="793.00" y="499.50" textLength="424.50" lengthAdjust="spacing">&lt;div class="card-header h3 text-center"&gt;</text>
<text x="844.00" y="537.50" textLength="645.00" lengthAdjust="spacing">&lt;i class="fa fa-user-circle text-success"&gt;&lt;/i&gt;&amp;nbsp;用户登录</text>
<text x="793.00" y="572.50" textLength="71.00" lengthAdjust="spacing">&lt;/div&gt;</text>
<text x="793.00" y="602.00" textLength="259.00" lengthAdjust="spacing">&lt;div class="card-body"&gt;</text>
<text x="845.00" y="631.25" textLength="337.40" lengthAdjust="spacing">{include file="shared/_errors" /}</text>
<text x="844.00" y="661.25" textLength="538.50" lengthAdjust="spacing">&lt;form method="post" action="{:url('login.save')}"&gt;</text>
<text x="896.50" y="691.25" textLength="165.50" lengthAdjust="spacing">{:token_field()}</text>
<text x="894.50" y="720.50" textLength="211.10" lengthAdjust="spacing">&lt;div class="mb-3"&gt;</text>
<text x="947.50" y="758.50" textLength="545.00" lengthAdjust="spacing">&lt;label for="name" class="form-label"&gt;名称&lt;/label&gt;</text>
<text x="947.50" y="794.50" textLength="473.00" lengthAdjust="spacing">&lt;input type="text" required maxlength="255"</text>
<text x="1038.00" y="832.00" textLength="557.50" lengthAdjust="spacing">placeholder="请输入您的名称" class="form-control"</text>
<text x="639.40" y="867.40" textLength="278.60" lengthAdjust="spacing">id="name" name="name"&gt;</text>
</svg>
<!-- floating convert button -->
<svg style="left:1856px;top:196px" width="42" height="42" viewBox="1856 196 42 42">
  <circle cx="1877" cy="217" r="19.800" fill="#fbfff7"/>
  <circle cx="1877" cy="217" r="17" fill="#4285f0"/>
  <rect x="1870.700" y="209.500" width="12.700" height="8.500" fill="#f4f8ff"/>
  <rect x="1875" y="213.300" width="11.800" height="12" fill="#4285f0"/>
  <rect x="1876" y="214.300" width="10" height="10.300" fill="#f4f8ff"/>
  <path d="M1877.800 216 L1879.600 222.500 L1881.200 218.500 L1882.800 222.500 L1884.600 216" fill="none" stroke="#4285f0" stroke-width="1.300" stroke-linejoin="round"/>
  <path d="M1867.800 218.500 V223 H1872.500 M1870.500 220.500 L1873.200 223 L1870.500 225.700" fill="none" stroke="#f4f8ff" stroke-width="1.400"/>
</svg>
<!-- I-beam cursor -->
<svg style="left:1030px;top:470px" width="12" height="26" viewBox="1030 470 12 26" shape-rendering="crispEdges">
  <g fill="#fdfffa"><rect x="1032" y="473" width="7" height="3"/><rect x="1034" y="474" width="3" height="18"/><rect x="1032" y="490" width="7" height="3"/><rect x="1033" y="485" width="5" height="3"/></g>
  <g fill="#0a0a0a"><rect x="1033" y="474" width="2" height="1"/><rect x="1036" y="474" width="2" height="1"/><rect x="1035" y="475" width="1" height="16"/><rect x="1033" y="491" width="2" height="1"/><rect x="1036" y="491" width="2" height="1"/><rect x="1034" y="486" width="3" height="1"/></g>
</svg>
<!-- vertical scrollbar -->
<div class="abs" style="left:1900px;top:184px;width:20px;height:806px;background:#1a1a1c"></div>
<svg style="left:1900px;top:190px" width="20" height="800" viewBox="1900 190 20 800">
  <path d="M1906.700 203 L1910 197 L1913.300 203 Z" fill="#8a8a8c"/>
  <path d="M1906.700 977 L1910 983 L1913.300 977 Z" fill="#8a8a8c"/>
  <rect x="1905.700" y="875.700" width="9.500" height="56" rx="4.700" fill="#58585a"/>
</svg>
<!-- status bar -->
<div class="abs" style="left:0;top:990px;width:1920px;height:26px;background:#1a1a1c;border-top:1px solid #2c2c2e"></div>
<div class="abs" style="left:1243px;top:991px;width:30px;height:25px;background:#303032;border-radius:3px 3px 0 0"></div>
<div class="abs" style="left:1294px;top:991px;width:30px;height:25px;background:#303032;border-radius:3px 3px 0 0"></div>
<div class="abs" style="left:1517px;top:991px;width:29px;height:25px;background:#303032;border-radius:3px 3px 0 0"></div>
<div class="abs" style="left:1387px;top:994px;width:26px;height:24px;background:#e0365a;border-radius:5px"></div>
<div class="abs" style="left:146px;top:992px;width:137px;height:30px;background:#262628;border:1px solid #5c5c5e;border-radius:5px"></div>
<div class="t" style="left:146px;top:995px;width:137px;text-align:center;font-size:15.500px;line-height:20px;color:#e4e4e4;letter-spacing:0.5px;padding-left:0">21/22</div>
<div class="t" style="left:390px;top:996px;font-size:15px;line-height:20px;color:#dcdcdc">回到第21页</div>
<div class="t" style="left:1577px;top:996px;font-size:15px;line-height:20px;color:#c6c6c6">147%</div>
<div class="vdiv" style="left:55px;top:995px;height:21px;background:#303032"></div>
<div class="vdiv" style="left:373px;top:995px;height:21px;background:#303032"></div>
<div class="vdiv" style="left:1232px;top:996px;height:17px;background:#343436"></div>
<div class="vdiv" style="left:1283px;top:996px;height:17px;background:#343436"></div>
<div class="vdiv" style="left:1374px;top:996px;height:17px;background:#343436"></div>
<div class="vdiv" style="left:1425px;top:996px;height:17px;background:#343436"></div>
<div class="vdiv" style="left:1555px;top:996px;height:17px;background:#343436"></div>
<svg style="left:0;top:990px" width="1920" height="26" viewBox="0 990 1920 26" fill="none" stroke="#cdcdcd" stroke-width="1.400" stroke-linecap="round" stroke-linejoin="round">
  <!-- sidebar toggle -->
  <rect x="22" y="998.500" width="16" height="13" rx="1"/><path d="M27.300 998.500 V1011.500"/>
  <!-- nav -->
  <path d="M76.500 999 V1010.700 M85.500 999 L79.300 1004.850 L85.500 1010.700"/>
  <path d="M123.700 999 L117.700 1004.850 L123.700 1010.700"/>
  <path d="M305 999 L311 1004.850 L305 1010.700"/>
  <path d="M343.700 999 L349.700 1004.850 L343.700 1010.700 M352.800 999 V1010.700"/>
  <!-- eye -->
  <path d="M1182.500 1004.300 Q1191 995 1199.500 1004.300 Q1191 1013.600 1182.500 1004.300 Z"/><circle cx="1191" cy="1004.300" r="2.700"/>
  <path d="M1207.300 1004 L1210 1006.700 L1212.700 1004" stroke-width="1.600"/>
  <!-- continuous -->
  <path d="M1250.700 996.300 V1001 Q1250.700 1002 1251.700 1002 H1264.200 Q1265.200 1002 1265.200 1001 V996.300 M1250.700 1012 V1007.500 Q1250.700 1006.500 1251.700 1006.500 H1264.200 Q1265.200 1006.500 1265.200 1007.500 V1012" stroke-width="1.500"/>
  <!-- single -->
  <rect x="1302.200" y="997" width="13.600" height="14.500" rx="1"/><path d="M1305.500 1001.500 H1312.500 M1305.500 1005 H1310"/>
  <!-- double -->
  <rect x="1342" y="997" width="5.300" height="14.500" rx="0.800"/><rect x="1350.500" y="997" width="5.300" height="14.500" rx="0.800"/>
  <!-- play triangle -->
  <path d="M1398 1001 L1404 1005 L1398 1009 Z" fill="#1a1418" stroke="#1a1418" stroke-width="1"/>
  <!-- 1:1 -->
  <rect x="1444.500" y="997.700" width="15" height="13.800" rx="0.500"/>
  <path d="M1448.300 1001.300 V1008 M1455.700 1001.300 V1008" stroke-width="1.300"/><circle cx="1452" cy="1003" r="0.700" fill="#cdcdcd" stroke="none"/><circle cx="1452" cy="1006.300" r="0.700" fill="#cdcdcd" stroke="none"/>
  <!-- fit page -->
  <rect x="1486.700" y="999.500" width="10" height="10" />
  <path d="M1484 1000 V997.700 Q1484 996.700 1485 996.700 H1487.500 M1496 996.700 H1498.500 Q1499.500 996.700 1499.500 997.700 V1000 M1499.500 1009 V1011.300 Q1499.500 1012.300 1498.500 1012.300 H1496 M1487.500 1012.300 H1485 Q1484 1012.300 1484 1011.300 V1009"/>
  <!-- fit width -->
  <path d="M1525.500 1006 V998 Q1525.500 997.200 1526.300 997.200 H1535.700 Q1536.500 997.200 1536.500 998 V1006"/>
  <path d="M1523.500 1009.700 H1538.500 M1525.700 1007.500 L1523.500 1009.700 L1525.700 1011.900 M1536.300 1007.500 L1538.500 1009.700 L1536.300 1011.900"/>
  <!-- zoom chevron -->
  <path d="M1631 1003.700 L1634 1006.700 L1637 1003.700" stroke-width="1.600"/>
  <!-- minus / slider / plus -->
  <path d="M1662 1004.800 H1675" stroke="#e0e0e0" stroke-width="2.200"/>
  <path d="M1759 1004.800 H1825" stroke="#4a4a4c" stroke-width="1.600"/>
  <path d="M1693.500 1004.800 H1755" stroke="#3f7fe8" stroke-width="1.800"/>
  <circle cx="1759.300" cy="1004.800" r="5" fill="#4c4c4e" stroke="#9c9c9e" stroke-width="1.300"/>
  <path d="M1845 1004.800 H1856 M1850.500 999.300 V1010.300" stroke="#e0e0e0" stroke-width="2.200"/>
  <!-- fullscreen -->
  <path d="M1883.200 1001 V998.300 Q1883.200 997.200 1884.300 997.200 H1887 M1898.500 1008 V1010.700 Q1898.500 1011.800 1897.400 1011.800 H1894.700 M1894.300 997.200 H1898.500 V1001.400 M1898.300 997.400 L1892.800 1002.900 M1887.400 1011.800 H1883.200 V1007.600 M1883.400 1011.600 L1888.900 1006.100"/>
</svg>
</body>
</html>
